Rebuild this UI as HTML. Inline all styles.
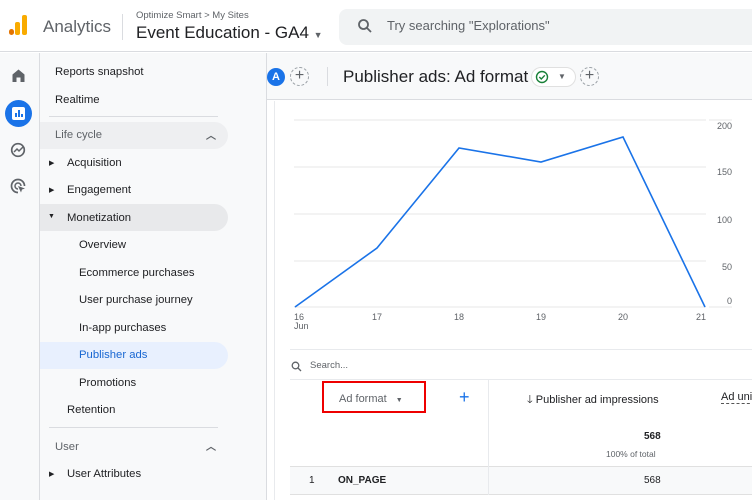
<!DOCTYPE html>
<html><head><meta charset="utf-8"><style>
*{margin:0;padding:0;box-sizing:border-box}
body{width:752px;height:500px;overflow:hidden;font-family:"Liberation Sans",Arial,sans-serif;background:#fff;position:relative;color:#202124}
.a{position:absolute}
.nav{font-size:11.3px;color:#202124;position:absolute;white-space:nowrap}
</style></head><body>
<div class="a" style="left:0;top:0;width:752px;height:52px;background:#fff;border-bottom:1px solid #dadce0"></div>
<div class="a" style="left:9px;top:29px;width:5px;height:6px;border-radius:3px;background:#e37400"></div>
<div class="a" style="left:15px;top:22px;width:5px;height:13px;border-radius:2px;background:#f9ab00"></div>
<div class="a" style="left:22px;top:15px;width:5px;height:20px;border-radius:2px;background:#f9ab00"></div>
<div class="a" style="left:43px;top:17px;font-size:17px;color:#5f6368">Analytics</div>
<div class="a" style="left:122px;top:14px;width:1px;height:26px;background:#dadce0"></div>
<div class="a" style="left:136px;top:10px;font-size:9.5px;color:#5f6368">Optimize Smart &gt; My Sites</div>
<div class="a" style="left:136px;top:23px;font-size:17px;color:#202124">Event Education - GA4 <span style="font-size:9px;color:#5f6368">▼</span></div>
<div class="a" style="left:339px;top:9px;width:420px;height:36px;background:#f1f3f4;border-radius:8px"></div>
<svg class="a" style="left:357px;top:18px" width="16" height="16" viewBox="0 0 16 16"><circle cx="6.5" cy="6.5" r="4.5" fill="none" stroke="#5f6368" stroke-width="1.8"/><path d="M10 10l4 4" stroke="#5f6368" stroke-width="1.8"/></svg>
<div class="a" style="left:387px;top:18px;font-size:13px;color:#5f6368">Try searching "Explorations"</div>
<div class="a" style="left:0;top:53px;width:267px;height:447px;background:#f8f9fa"></div>
<div class="a" style="left:39px;top:53px;width:1px;height:447px;background:#dadce0"></div>
<div class="a" style="left:266px;top:53px;width:1px;height:447px;background:#dadce0"></div>
<svg class="a" style="left:11px;top:68px" width="15" height="15" viewBox="0 0 15 15"><path d="M1.5 14V6.5L7.5 1.5l6 5V14H9.5V9.5h-4V14z" fill="#5f6368"/></svg>
<div class="a" style="left:5px;top:100px;width:27px;height:27px;border-radius:50%;background:#1a73e8"></div>
<div class="a" style="left:12px;top:107px;width:13px;height:13px;background:#fff;border-radius:2px"></div>
<div class="a" style="left:15px;top:113px;width:1.5px;height:4px;background:#1a73e8"></div>
<div class="a" style="left:18px;top:110px;width:1.5px;height:7px;background:#1a73e8"></div>
<div class="a" style="left:21px;top:114px;width:1.5px;height:3px;background:#1a73e8"></div>
<svg class="a" style="left:10px;top:142px" width="17" height="17" viewBox="0 0 17 17"><circle cx="8" cy="8" r="6.3" fill="none" stroke="#5f6368" stroke-width="1.7"/><path d="M4 10l3-3 2 2 4-4" fill="none" stroke="#5f6368" stroke-width="1.5"/></svg>
<svg class="a" style="left:10px;top:178px" width="17" height="17" viewBox="0 0 17 17"><path d="M8 14.5A6.5 6.5 0 1 1 14.5 8" fill="none" stroke="#5f6368" stroke-width="1.7"/><path d="M8 11A3 3 0 1 1 11 8" fill="none" stroke="#5f6368" stroke-width="1.5"/><path d="M8 8l7 2.5-3 1-1 3z" fill="#5f6368"/></svg>
<div class="nav" style="left:55px;top:66px">Reports snapshot</div>
<div class="nav" style="left:55px;top:94px">Realtime</div>
<div class="a" style="left:49px;top:116px;width:169px;height:1px;background:#dadce0"></div>
<div class="a" style="left:40px;top:122px;width:188px;height:27px;background:#eeeff1;border-radius:0 14px 14px 0"></div>
<div class="nav" style="left:55px;top:129px;color:#5f6368">Life cycle</div>
<div class="nav" style="left:206px;top:127px;color:#5f6368;font-size:10px;font-weight:bold">︿</div>
<div class="nav" style="left:49px;top:159px;font-size:7px">▶</div>
<div class="nav" style="left:67px;top:157px">Acquisition</div>
<div class="nav" style="left:49px;top:186px;font-size:7px">▶</div>
<div class="nav" style="left:67px;top:184px">Engagement</div>
<div class="a" style="left:40px;top:204px;width:188px;height:27px;background:#e8e9eb;border-radius:0 14px 14px 0"></div>
<div class="nav" style="left:48px;top:213px;font-size:7px">▼</div>
<div class="nav" style="left:67px;top:212px">Monetization</div>
<div class="nav" style="left:79px;top:239px">Overview</div>
<div class="nav" style="left:79px;top:267px">Ecommerce purchases</div>
<div class="nav" style="left:79px;top:294px">User purchase journey</div>
<div class="nav" style="left:79px;top:322px">In-app purchases</div>
<div class="a" style="left:40px;top:342px;width:188px;height:27px;background:#e8f0fe;border-radius:0 14px 14px 0"></div>
<div class="nav" style="left:79px;top:349px;color:#1967d2">Publisher ads</div>
<div class="nav" style="left:79px;top:377px">Promotions</div>
<div class="nav" style="left:67px;top:404px">Retention</div>
<div class="a" style="left:49px;top:427px;width:169px;height:1px;background:#dadce0"></div>
<div class="nav" style="left:55px;top:441px;color:#5f6368">User</div>
<div class="nav" style="left:206px;top:438px;color:#5f6368;font-size:10px;font-weight:bold">︿</div>
<div class="nav" style="left:49px;top:470px;font-size:7px">▶</div>
<div class="nav" style="left:67px;top:468px">User Attributes</div>
<div class="a" style="left:267px;top:53px;width:485px;height:47px;background:#f8f9fa;border-bottom:1px solid #dadce0"></div>
<div class="a" style="left:267px;top:68px;width:18px;height:18px;border-radius:50%;background:#1a73e8;color:#fff;font-size:11px;font-weight:bold;text-align:center;line-height:18px">A</div>
<div class="a" style="left:290px;top:67px;width:19px;height:19px;border-radius:50%;border:1px dashed #9aa0a6;color:#5f6368;font-size:16px;text-align:center;line-height:16px">+</div>
<div class="a" style="left:327px;top:67px;width:1px;height:19px;background:#dadce0"></div>
<div class="a" style="left:343px;top:67px;font-size:17px;color:#202124">Publisher ads: Ad format</div>
<div class="a" style="left:531px;top:67px;width:45px;height:20px;border-radius:10px;border:1px solid #e0e0e0;background:#fff"></div>
<svg class="a" style="left:535px;top:70px" width="14" height="14" viewBox="0 0 14 14"><circle cx="7" cy="7" r="5.5" fill="none" stroke="#188038" stroke-width="1.4"/><path d="M4.3 7l2 2 3.5-3.7" fill="none" stroke="#188038" stroke-width="1.4"/></svg>
<div class="a" style="left:558px;top:72px;font-size:8px;color:#5f6368">▼</div>
<div class="a" style="left:580px;top:67px;width:19px;height:19px;border-radius:50%;border:1px dashed #9aa0a6;color:#5f6368;font-size:16px;text-align:center;line-height:16px">+</div>
<div class="a" style="left:274px;top:101px;width:1px;height:399px;background:#e8eaed"></div>
<svg class="a" style="left:0;top:0" width="752" height="500">
<g stroke="#ececec" stroke-width="1.3"><line x1="294" y1="120" x2="706" y2="120"/><line x1="294" y1="167" x2="706" y2="167"/><line x1="294" y1="214" x2="706" y2="214"/><line x1="294" y1="261" x2="706" y2="261"/><line x1="294" y1="307" x2="706" y2="307"/>
<line x1="709" y1="120" x2="732" y2="120"/><line x1="709" y1="307" x2="732" y2="307"/></g>
<polyline points="295,307 377,248 459,148 541,162 623,137 705,307" fill="none" stroke="#1a73e8" stroke-width="1.6"/>
<g font-size="9" fill="#5f6368" font-family="Liberation Sans"><text x="717" y="129">200</text><text x="717" y="175">150</text><text x="717" y="223">100</text><text x="722" y="270">50</text><text x="727" y="304">0</text>
<text x="294" y="320">16</text><text x="294" y="329">Jun</text><text x="372" y="320">17</text><text x="454" y="320">18</text><text x="536" y="320">19</text><text x="618" y="320">20</text><text x="696" y="320">21</text></g>
</svg>
<div class="a" style="left:290px;top:349px;width:462px;height:1px;background:#e8eaed"></div>
<svg class="a" style="left:291px;top:361px" width="11" height="11" viewBox="0 0 11 11"><circle cx="4.5" cy="4.5" r="3.3" fill="none" stroke="#5f6368" stroke-width="1.3"/><path d="M7 7l3 3" stroke="#5f6368" stroke-width="1.3"/></svg>
<div class="a" style="left:310px;top:360px;font-size:9.5px;color:#5f6368">Search...</div>
<div class="a" style="left:290px;top:379px;width:462px;height:1px;background:#e8eaed"></div>
<div class="a" style="left:488px;top:380px;width:1px;height:115px;background:#e8eaed"></div>
<div class="a" style="left:322px;top:381px;width:104px;height:32px;border:2px solid #e00"></div>
<div class="a" style="left:339px;top:393px;font-size:11px;color:#5f6368">Ad format <span style="font-size:7px;margin-left:6px">▼</span></div>
<div class="a" style="left:459px;top:387px;font-size:18px;color:#1a73e8">+</div>
<div class="a" style="left:527px;top:391px;font-size:11px;color:#202124;white-space:nowrap">🡓 Publisher ad impressions</div>
<div class="a" style="left:721px;top:391px;font-size:11px;color:#202124;border-bottom:1px dashed #555;white-space:nowrap">Ad unit</div>
<div class="a" style="left:644px;top:431px;font-size:10px;font-weight:bold;color:#202124">568</div>
<div class="a" style="left:606px;top:449px;font-size:8.5px;color:#5f6368">100% of total</div>
<div class="a" style="left:290px;top:466px;width:462px;height:29px;background:#f8f9fa;border-top:1px solid #e0e0e0;border-bottom:1px solid #e0e0e0"></div>
<div class="a" style="left:488px;top:466px;width:1px;height:29px;background:#e8eaed"></div>
<div class="a" style="left:309px;top:475px;font-size:10px">1</div>
<div class="a" style="left:338px;top:475px;font-size:10px;font-weight:bold">ON_PAGE</div>
<div class="a" style="left:644px;top:475px;font-size:10px">568</div>
</body></html>
